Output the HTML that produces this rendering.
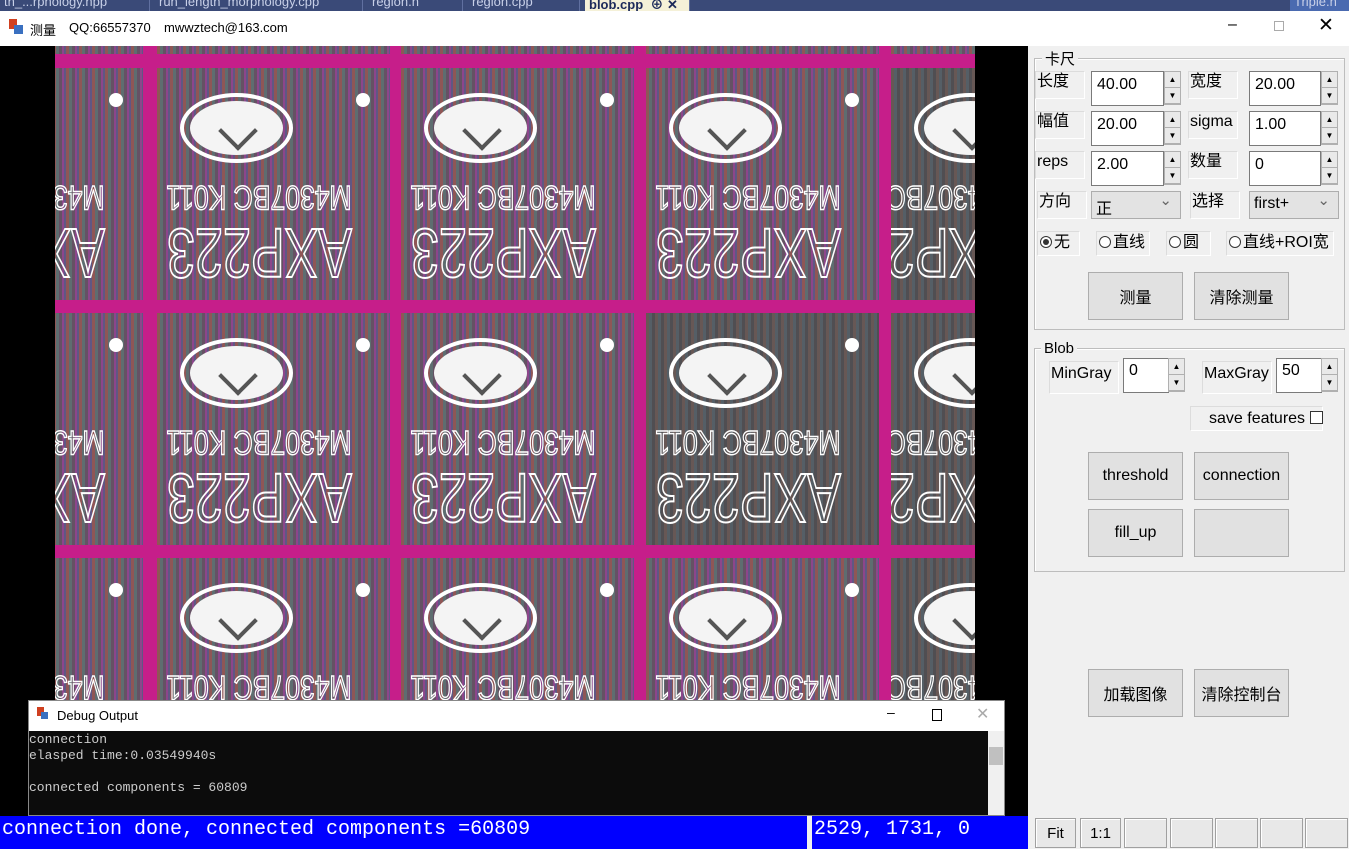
<!DOCTYPE html>
<html><head><meta charset="utf-8"><style>
*{margin:0;padding:0;box-sizing:border-box}
body{width:1349px;height:849px;overflow:hidden;background:#f0f0f0;font-family:"Liberation Sans","Noto Sans CJK SC",sans-serif;font-size:15px;color:#000;position:relative}
.a{position:absolute}
.tabs{left:0;top:0;width:1349px;height:11px;background:#3a4a78;overflow:hidden}
.tab{top:-6px;height:17px;font-size:13px;color:#c8d0e8;border-right:1px solid #6070a0;padding-left:4px}
.title{left:0;top:11px;width:1349px;height:35px;background:#fff;font-size:13px}
.img{left:0;top:46px;width:1028px;height:770px;background:#000;overflow:hidden}
.mag{left:55px;top:0;width:920px;height:770px;background:#c61e8a}
.tw{position:absolute;overflow:hidden}
.t{position:absolute;width:233px;height:232px;background:#70586e;background-image:repeating-linear-gradient(90deg,rgba(255,80,0,.22) 0 3px,rgba(0,220,120,.16) 3px 6px,rgba(40,40,40,.15) 6px 9px,rgba(255,0,255,.2) 9px 11px,rgba(0,80,255,.15) 11px 13px)}
.t.g{background:#5a585c;background-image:repeating-linear-gradient(90deg,rgba(255,80,0,.08) 0 3px,rgba(0,200,255,.06) 3px 6px,rgba(40,40,40,.2) 6px 9px)}
.dot{left:199px;top:25px;width:14px;height:14px;border-radius:50%;background:#fff}
.ring{left:23px;top:25px;width:113px;height:70px;border:4px solid #fff;border-radius:50%}
.ring2{left:33px;top:33px;width:93px;height:54px;border-radius:50%;background:#f4f4f4}
.ring2:after{content:"";position:absolute;left:34px;top:16px;width:24px;height:24px;border-left:4px solid #555;border-bottom:4px solid #555;transform:rotate(-45deg)}
.t1{left:21px;top:112px;width:195px;text-align:center;font-size:34px;line-height:34px;color:transparent;-webkit-text-stroke:1.5px #fff;transform:rotate(180deg) scaleX(.78);white-space:nowrap}
.t2{left:10px;top:150px;width:215px;text-align:center;font-size:70px;line-height:70px;color:transparent;-webkit-text-stroke:2px #fff;transform:rotate(180deg) scaleX(.72);white-space:nowrap}
.grp{border:1px solid #bdbdbd;box-shadow:inset 1px 1px 0 #fff}
.lg{background:#f0f0f0;padding:0 3px;font-size:15px}
.lb{border:1px solid #fff;border-top-color:#dcdcdc;border-left-color:#dcdcdc;font-size:16px;line-height:20px;padding-left:1px;white-space:nowrap}
.in{background:#fff;border:1px solid #7a7a7a;font-size:16px;padding:4px 0 0 5px}
.sp{width:17px;border:1px solid #b0b0b0;background:#e9e9e9}
.sp div{height:50%;border-bottom:1px solid #b0b0b0;font-size:8px;text-align:center;line-height:15px;color:#000}
.cb{background:#e3e3e3;border:1px solid #adadad;font-size:16px;padding:3px 0 0 4px}
.cb:after{content:"⌄";position:absolute;right:8px;top:-1px;font-size:15px;color:#666}
.btn{background:#e1e1e1;border:1px solid #adadad;font-size:16px;display:flex;align-items:center;justify-content:center}
.rd{border:1px solid #fff;border-top-color:#dcdcdc;border-left-color:#dcdcdc;font-size:16px;line-height:22px;padding-left:2px;white-space:nowrap}
.rd i{display:inline-block;width:12px;height:12px;border:1px solid #333;border-radius:50%;vertical-align:-1px;margin-right:2px;position:relative;background:#fff}
.rd i.on:after{content:"";position:absolute;left:2px;top:2px;width:6px;height:6px;border-radius:50%;background:#333}
.status{top:816px;height:33px;background:#0000ff;color:#fff;font-family:"Liberation Mono",monospace;font-size:20px;line-height:28px;padding-left:2px;white-space:pre}
.sb{top:818px;height:30px;border:1px solid #a0a0a0;box-shadow:inset 1px 1px 0 #fff;background:#e8e8e8;font-size:15px;display:flex;align-items:center;justify-content:center}
</style></head><body>
<div class="a tabs">
<div class="a tab" style="left:0;width:150px">th_...rphology.hpp</div>
<div class="a tab" style="left:155px;width:208px">run_length_morphology.cpp</div>
<div class="a tab" style="left:368px;width:95px">region.h</div>
<div class="a tab" style="left:468px;width:112px">region.cpp</div>
<div class="a tab" style="left:585px;width:105px;background:#f5f1d8;color:#1c2a5a;font-weight:bold">blob.cpp &nbsp;⊕ ✕</div>
<div class="a tab" style="left:1290px;width:60px;background:#4a6ab0">Triple.h</div>
</div>
<div class="a title">
<div class="a" style="left:9px;top:8px;width:8px;height:10px;background:#d04020"></div>
<div class="a" style="left:14px;top:14px;width:9px;height:9px;background:#3a70c0"></div>
<div class="a" style="left:30px;top:9px">测量</div>
<div class="a" style="left:69px;top:9px">QQ:66557370</div>
<div class="a" style="left:164px;top:9px">mwwztech@163.com</div>
<div class="a" style="left:1228px;top:5px;font-size:16px">–</div>
<div class="a" style="left:1274px;top:10px;width:10px;height:10px;border:1px solid #aaa"></div>
<div class="a" style="left:1318px;top:3px;font-size:19px">✕</div>
</div>
<div class="a img">
<div class="a mag">
<div class="tw" style="left:0;top:0;width:88px;height:8px"><div class="t" style="left:-145px;top:-224px"></div></div>
<div class="tw" style="left:102px;top:0;width:233px;height:8px"><div class="t"  style="top:-224px"></div></div>
<div class="tw" style="left:346px;top:0;width:233px;height:8px"><div class="t" style="top:-224px"></div></div>
<div class="tw" style="left:591px;top:0;width:234px;height:8px"><div class="t" style="top:-224px"></div></div>
<div class="tw" style="left:836px;top:0;width:84px;height:8px"><div class="t" style="top:-224px"></div></div>

<div class="tw" style="left:0;top:22px;width:88px;height:232px"><div class="t" style="left:-145px"><div class="a dot"></div><div class="a ring"></div><div class="a ring2"></div><div class="a t1">M4307BC K011</div><div class="a t2">AXP223</div></div></div>
<div class="tw" style="left:102px;top:22px;width:233px;height:232px"><div class="t"><div class="a dot"></div><div class="a ring"></div><div class="a ring2"></div><div class="a t1">M4307BC K011</div><div class="a t2">AXP223</div></div></div>
<div class="tw" style="left:346px;top:22px;width:233px;height:232px"><div class="t"><div class="a dot"></div><div class="a ring"></div><div class="a ring2"></div><div class="a t1">M4307BC K011</div><div class="a t2">AXP223</div></div></div>
<div class="tw" style="left:591px;top:22px;width:234px;height:232px"><div class="t"><div class="a dot"></div><div class="a ring"></div><div class="a ring2"></div><div class="a t1">M4307BC K011</div><div class="a t2">AXP223</div></div></div>
<div class="tw" style="left:836px;top:22px;width:84px;height:232px"><div class="t g" style="left:0"><div class="a ring"></div><div class="a ring2"></div><div class="a t1" style="left:-60px">M4307BC K011</div><div class="a t2" style="left:-60px">AXP223</div></div></div>

<div class="tw" style="left:0;top:267px;width:88px;height:232px"><div class="t" style="left:-145px"><div class="a dot"></div><div class="a ring"></div><div class="a ring2"></div><div class="a t1">M4307BC K011</div><div class="a t2">AXP223</div></div></div>
<div class="tw" style="left:102px;top:267px;width:233px;height:232px"><div class="t"><div class="a dot"></div><div class="a ring"></div><div class="a ring2"></div><div class="a t1">M4307BC K011</div><div class="a t2">AXP223</div></div></div>
<div class="tw" style="left:346px;top:267px;width:233px;height:232px"><div class="t"><div class="a dot"></div><div class="a ring"></div><div class="a ring2"></div><div class="a t1">M4307BC K011</div><div class="a t2">AXP223</div></div></div>
<div class="tw" style="left:591px;top:267px;width:234px;height:232px"><div class="t g"><div class="a dot"></div><div class="a ring"></div><div class="a ring2"></div><div class="a t1">M4307BC K011</div><div class="a t2">AXP223</div></div></div>
<div class="tw" style="left:836px;top:267px;width:84px;height:232px"><div class="t g"><div class="a ring"></div><div class="a ring2"></div><div class="a t1" style="left:-60px">M4307BC K011</div><div class="a t2" style="left:-60px">AXP223</div></div></div>

<div class="tw" style="left:0;top:512px;width:88px;height:258px"><div class="t" style="left:-145px"><div class="a dot"></div><div class="a ring"></div><div class="a ring2"></div><div class="a t1">M4307BC K011</div><div class="a t2">AXP223</div></div></div>
<div class="tw" style="left:102px;top:512px;width:233px;height:258px"><div class="t"><div class="a dot"></div><div class="a ring"></div><div class="a ring2"></div><div class="a t1">M4307BC K011</div><div class="a t2">AXP223</div></div></div>
<div class="tw" style="left:346px;top:512px;width:233px;height:258px"><div class="t"><div class="a dot"></div><div class="a ring"></div><div class="a ring2"></div><div class="a t1">M4307BC K011</div><div class="a t2">AXP223</div></div></div>
<div class="tw" style="left:591px;top:512px;width:234px;height:258px"><div class="t"><div class="a dot"></div><div class="a ring"></div><div class="a ring2"></div><div class="a t1">M4307BC K011</div><div class="a t2">AXP223</div></div></div>
<div class="tw" style="left:836px;top:512px;width:84px;height:258px"><div class="t g"><div class="a ring"></div><div class="a ring2"></div><div class="a t1" style="left:-60px">M4307BC K011</div><div class="a t2" style="left:-60px">AXP223</div></div></div>
</div>
</div>

<div class="a" style="left:28px;top:700px;width:977px;height:116px;background:#0c0c0c;border:1px solid #888">
<div class="a" style="left:0;top:0;width:975px;height:30px;background:#fff;font-size:13px">
<div class="a" style="left:8px;top:6px;width:7px;height:9px;background:#d04020"></div>
<div class="a" style="left:12px;top:11px;width:7px;height:7px;background:#3a70c0"></div>
<div class="a" style="left:28px;top:7px">Debug Output</div>
<div class="a" style="left:858px;top:3px;font-size:14px">–</div>
<div class="a" style="left:903px;top:8px;width:10px;height:12px;border:1px solid #000"></div>
<div class="a" style="left:947px;top:3px;font-size:16px;color:#aaa">✕</div>
</div>
<div class="a" style="left:0;top:31px;font-family:'Liberation Mono',monospace;font-size:13px;line-height:16px;color:#ccc;white-space:pre">connection
elasped time:0.03549940s

connected components = 60809</div>
<div class="a" style="left:959px;top:30px;width:16px;height:84px;background:#f0f0f0"><div class="a" style="left:1px;top:16px;width:14px;height:18px;background:#c0c0c0"></div></div>
</div>

<div class="a status" style="left:0;width:807px">connection done, connected components =60809</div>
<div class="a status" style="left:812px;width:216px">2529, 1731, 0</div>

<div class="a grp" style="left:1034px;top:58px;width:311px;height:272px"></div>
<div class="a lg" style="left:1042px;top:48px">卡尺</div>
<div class="a lb" style="left:1035px;top:71px;width:50px;height:28px">长度</div>
<div class="a in" style="left:1091px;top:71px;width:73px;height:35px">40.00</div>
<div class="a sp" style="left:1164px;top:71px;height:34px"><div>▲</div><div>▼</div></div>
<div class="a lb" style="left:1188px;top:71px;width:50px;height:28px">宽度</div>
<div class="a in" style="left:1249px;top:71px;width:72px;height:35px">20.00</div>
<div class="a sp" style="left:1321px;top:71px;height:34px"><div>▲</div><div>▼</div></div>

<div class="a lb" style="left:1035px;top:111px;width:50px;height:28px">幅值</div>
<div class="a in" style="left:1091px;top:111px;width:73px;height:35px">20.00</div>
<div class="a sp" style="left:1164px;top:111px;height:34px"><div>▲</div><div>▼</div></div>
<div class="a lb" style="left:1188px;top:111px;width:50px;height:28px">sigma</div>
<div class="a in" style="left:1249px;top:111px;width:72px;height:35px">1.00</div>
<div class="a sp" style="left:1321px;top:111px;height:34px"><div>▲</div><div>▼</div></div>

<div class="a lb" style="left:1035px;top:151px;width:50px;height:28px">reps</div>
<div class="a in" style="left:1091px;top:151px;width:73px;height:35px">2.00</div>
<div class="a sp" style="left:1164px;top:151px;height:34px"><div>▲</div><div>▼</div></div>
<div class="a lb" style="left:1188px;top:151px;width:50px;height:28px">数量</div>
<div class="a in" style="left:1249px;top:151px;width:72px;height:35px">0</div>
<div class="a sp" style="left:1321px;top:151px;height:34px"><div>▲</div><div>▼</div></div>

<div class="a lb" style="left:1037px;top:191px;width:50px;height:28px">方向</div>
<div class="a cb" style="left:1091px;top:191px;width:90px;height:28px">正</div>
<div class="a lb" style="left:1190px;top:191px;width:50px;height:28px">选择</div>
<div class="a cb" style="left:1249px;top:191px;width:90px;height:28px">first+</div>

<div class="a rd" style="left:1037px;top:231px;width:43px;height:25px"><i class="on"></i>无</div>
<div class="a rd" style="left:1096px;top:231px;width:54px;height:25px"><i></i>直线</div>
<div class="a rd" style="left:1166px;top:231px;width:45px;height:25px"><i></i>圆</div>
<div class="a rd" style="left:1226px;top:231px;width:108px;height:25px"><i></i>直线+ROI宽</div>

<div class="a btn" style="left:1088px;top:272px;width:95px;height:48px">测量</div>
<div class="a btn" style="left:1194px;top:272px;width:95px;height:48px">清除测量</div>

<div class="a grp" style="left:1034px;top:348px;width:311px;height:224px"></div>
<div class="a lg" style="left:1041px;top:340px">Blob</div>
<div class="a lb" style="left:1049px;top:361px;width:70px;height:33px;padding-top:2px">MinGray</div>
<div class="a in" style="left:1123px;top:358px;width:46px;height:35px;padding-top:3px">0</div>
<div class="a sp" style="left:1168px;top:358px;height:34px"><div>▲</div><div>▼</div></div>
<div class="a lb" style="left:1202px;top:361px;width:70px;height:33px;padding-top:2px">MaxGray</div>
<div class="a in" style="left:1276px;top:358px;width:46px;height:35px;padding-top:3px">50</div>
<div class="a sp" style="left:1321px;top:358px;height:34px"><div>▲</div><div>▼</div></div>
<div class="a lb" style="left:1190px;top:406px;width:133px;height:25px;padding-left:18px;line-height:23px">save features <span style="display:inline-block;width:13px;height:13px;border:1px solid #333;background:#fff;vertical-align:-1px"></span></div>

<div class="a btn" style="left:1088px;top:452px;width:95px;height:48px">threshold</div>
<div class="a btn" style="left:1194px;top:452px;width:95px;height:48px">connection</div>
<div class="a btn" style="left:1088px;top:509px;width:95px;height:48px">fill_up</div>
<div class="a btn" style="left:1194px;top:509px;width:95px;height:48px"></div>

<div class="a btn" style="left:1088px;top:669px;width:95px;height:48px">加载图像</div>
<div class="a btn" style="left:1194px;top:669px;width:95px;height:48px">清除控制台</div>

<div class="a sb" style="left:1035px;width:41px">Fit</div>
<div class="a sb" style="left:1080px;width:41px">1:1</div>
<div class="a sb" style="left:1124px;width:43px"></div>
<div class="a sb" style="left:1170px;width:43px"></div>
<div class="a sb" style="left:1215px;width:43px"></div>
<div class="a sb" style="left:1260px;width:43px"></div>
<div class="a sb" style="left:1305px;width:43px"></div>
</body></html>
